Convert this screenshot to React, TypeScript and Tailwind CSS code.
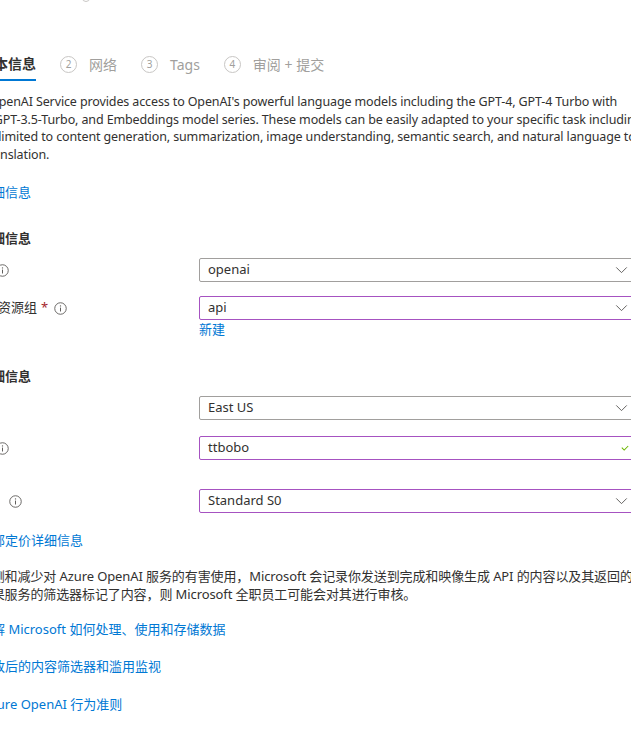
import type { ReactNode } from 'react'

const font = "font-['Noto_Sans','Noto_Sans_CJK_SC',sans-serif]"

function InfoIcon({ className = '' }: { className?: string }) {
  return (
    <svg viewBox="0 0 14 14" className={`h-[13px] w-[13px] shrink-0 ${className}`}>
      <circle cx="7" cy="7" r="6.2" fill="none" stroke="#605e5c" strokeWidth="1" />
      <line x1="7" y1="6" x2="7" y2="10.2" stroke="#605e5c" strokeWidth="1.1" />
      <circle cx="7" cy="4.2" r="0.75" fill="#605e5c" />
    </svg>
  )
}

function Chevron() {
  return (
    <svg viewBox="0 0 14 8" className="absolute right-[11px] top-1/2 h-[7px] w-[13px] -translate-y-1/2">
      <polyline points="1,1 7,7 13,1" fill="none" stroke="#605e5c" strokeWidth="1.1" />
    </svg>
  )
}

function Check() {
  return (
    <svg viewBox="0 0 10 7" className="absolute right-[10px] top-1/2 h-[6px] w-[8px] -translate-y-1/2">
      <polyline points="1,3 4,6 9,1" fill="none" stroke="#6bb700" strokeWidth="1.3" />
    </svg>
  )
}

function Field({
  value,
  active = false,
  valid = false,
}: {
  value: string
  active?: boolean
  valid?: boolean
}) {
  return (
    <div
      className={`relative flex h-[24px] w-[441px] items-center rounded-[2px] border pl-[8px] text-[13px] text-[#323130] ${
        active ? 'border-[#a652c1]' : 'border-[#a19f9d]'
      }`}
    >
      {value}
      {valid ? <Check /> : <Chevron />}
    </div>
  )
}

function Row({
  label,
  indent = 0,
  required = true,
  info = true,
  infoGap = 'ml-[6px]',
  className = '',
  children,
}: {
  label: string
  indent?: number
  required?: boolean
  info?: boolean
  infoGap?: string
  className?: string
  children: ReactNode
}) {
  return (
    <div className={`grid grid-cols-[246px_1fr] ${className}`}>
      <div className="flex h-[24px] items-center text-[13px] text-[#323130]" style={{ paddingLeft: indent }}>
        <span>{label}</span>
        {required && <span className="ml-[4px] text-[#a4262c]">*</span>}
        {info && <InfoIcon className={infoGap} />}
      </div>
      <div>{children}</div>
    </div>
  )
}

function Tab({ n, label }: { n: number; label: string }) {
  return (
    <div className="flex h-[30px] items-center pb-[3px]">
      <span className="flex h-[17px] w-[17px] items-center justify-center rounded-full border border-[#c8c6c4] text-[10px] text-[#a19f9d]">
        {n}
      </span>
      <span className="ml-[12px] text-[14px] text-[#a19f9d]">{label}</span>
    </div>
  )
}

const link = 'text-[13px] leading-[18px] text-[#0078d4] whitespace-nowrap'

export default function App() {
  return (
    <div className={`relative h-[736px] w-[631px] overflow-hidden bg-white ${font}`}>
      <div className="absolute left-[82px] top-[-6px] h-[8px] w-[8px] rounded-full border border-[#c8c6c4]" />

      <div className="ml-[-47px] flex flex-col">
        {/* wizard tabs */}
        <div className="ml-[27px] mt-[51px] flex items-center gap-[24px]">
          <div className="flex h-[30px] items-center border-b-2 border-[#0078d4] pb-[3px] text-[14px] font-semibold text-[#323130]">
            基本信息
          </div>
          <Tab n={2} label="网络" />
          <Tab n={3} label="Tags" />
          <Tab n={4} label="审阅 + 提交" />
        </div>

        <div className="mt-[12px] whitespace-nowrap text-[12.5px] leading-[17.5px] tracking-[-0.12px] text-[#323130]">
          <div>Azure OpenAI Service provides access to OpenAI's powerful language models including the GPT-4, GPT-4 Turbo with</div>
          <div>Vision, GPT-3.5-Turbo, and Embeddings model series. These models can be easily adapted to your specific task including</div>
          <div>but not limited to content generation, summarization, image understanding, semantic search, and natural language to</div>
          <div>code translation.</div>
        </div>

        <div className={`mt-[20px] ${link}`}>了解详细信息</div>

        <div className="mt-[28px] text-[13px] font-semibold leading-[18px] text-[#323130]">项目详细信息</div>

        <Row label="订阅" className="mt-[11px]">
          <Field value="openai" />
        </Row>
        <Row label="资源组" indent={45} className="mt-[14px]">
          <Field value="api" active />
          <div className={link}>新建</div>
        </Row>

        <div className="mt-[29px] text-[13px] font-semibold leading-[18px] text-[#323130]">实例详细信息</div>

        <Row label="区域" info={false} className="mt-[11px]">
          <Field value="East US" />
        </Row>
        <Row label="名称" className="mt-[16px]">
          <Field value="ttbobo" active valid />
        </Row>
        <Row label="定价层" required={false} infoGap="ml-[17px]" className="mt-[29px]">
          <Field value="Standard S0" active />
        </Row>

        <div className={`mt-[18px] ${link}`}>查看全部定价详细信息</div>

        <div className="mt-[18px] whitespace-nowrap text-[13px] leading-[18px] tracking-[-0.1px] text-[#323130]">
          <div>为了检测和减少对 Azure OpenAI 服务的有害使用，Microsoft 会记录你发送到完成和映像生成 API 的内容以及其返回的内容。</div>
          <div>容。如果服务的筛选器标记了内容，则 Microsoft 全职员工可能会对其进行审核。</div>
        </div>

        <div className={`mt-[17px] ${link}`}>详细了解 Microsoft 如何处理、使用和存储数据</div>
        <div className={`mt-[19px] ${link}`}>申请修改后的内容筛选器和滥用监视</div>
        <div className={`mt-[20px] ${link} text-[12.5px]`}>查看 Azure OpenAI 行为准则</div>
      </div>
    </div>
  )
}
